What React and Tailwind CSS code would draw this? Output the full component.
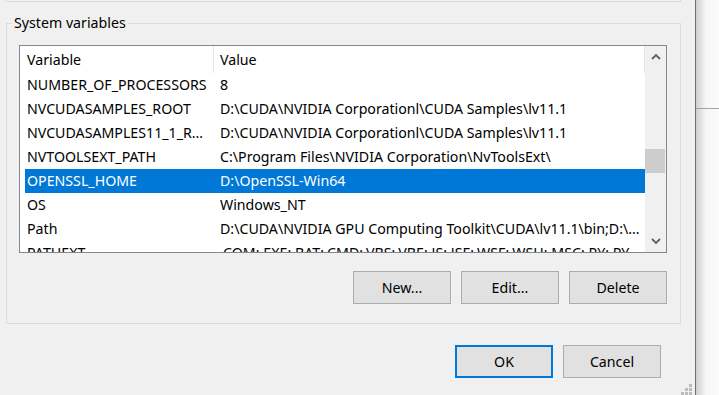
import React from 'react';

const rows = [
  { name: 'NUMBER_OF_PROCESSORS', value: '8' },
  { name: 'NVCUDASAMPLES_ROOT', value: 'D:\\CUDA\\NVIDIA Corporationl\\CUDA Samples\\lv11.1' },
  { name: 'NVCUDASAMPLES11_1_ROOT', value: 'D:\\CUDA\\NVIDIA Corporationl\\CUDA Samples\\lv11.1' },
  { name: 'NVTOOLSEXT_PATH', value: 'C:\\Program Files\\NVIDIA Corporation\\NvToolsExt\\' },
  { name: 'OPENSSL_HOME', value: 'D:\\OpenSSL-Win64', selected: true },
  { name: 'OS', value: 'Windows_NT' },
  { name: 'Path', value: 'D:\\CUDA\\NVIDIA GPU Computing Toolkit\\CUDA\\lv11.1\\bin;D:\\CUDA\\NVIDIA GPU Computing Toolkit\\CUDA\\lv11.1\\libnvvp' },
  { name: 'PATHEXT', value: '.COM;.EXE;.BAT;.CMD;.VBS;.VBE;.JS;.JSE;.WSF;.WSH;.MSC;.PY;.PYW' },
];

const Chevron = ({ down }) => (
  <svg width="10" height="7" viewBox="0 0 10 7" className={down ? 'rotate-180' : ''}>
    <path d="M1 6 L5 2 L9 6" fill="none" stroke="#606060" strokeWidth="1.8" />
  </svg>
);

const WinButton = ({ children, focused }) => (
  <button
    className={`h-[33px] w-[98px] bg-[#e1e1e1] text-black ${
      focused ? 'border-2 border-[#0078d7]' : 'border border-[#adadad]'
    }`}
  >
    {children}
  </button>
);

export default function App() {
  return (
    <div className="flex h-[395px] w-[719px] overflow-hidden bg-[#f0f0f0] font-['Noto_Sans',sans-serif] text-[14.2px] text-black">
      <div className="relative w-[696px] shrink-0 border-r border-[#6f6f6f]">
        <div className="ml-[5px] h-[2px] w-[676px] border-b border-l border-r border-[#dcdcdc]" />

        <div className="ml-[6px] mt-[21px] h-[301px] w-[675px] border border-[#dcdcdc]">
          <span className="-mt-[11px] ml-[5px] block w-fit bg-[#f0f0f0] px-[2px] leading-[20px]">System variables</span>

          <div className="ml-[12px] mt-[12px] flex h-[208px] w-[648px] border border-[#828790] bg-white">
            <div className="flex-1 overflow-hidden">
              <div className="flex h-[27px] items-center">
                <div className="flex h-full w-[194px] items-center border-r border-[#e5e5e5] pl-[7px]">Variable</div>
                <div className="flex h-full flex-1 items-center border-r border-[#e5e5e5] pl-[6px]">Value</div>
              </div>
              <div className="pl-[5px]">
                {rows.map((r) => (
                  <div
                    key={r.name}
                    className={`flex h-[24px] leading-[24px] ${r.selected ? 'bg-[#0078d7] text-white' : ''}`}
                  >
                    <div className="w-[188px] shrink-0 truncate pl-[2px] pr-[4px]">{r.name}</div>
                    <div className="min-w-0 flex-1 truncate pl-[7px] pr-[4px]">{r.value}</div>
                  </div>
                ))}
              </div>
            </div>
            <div className="flex w-[21px] flex-col bg-[#f0f0f0]">
              <div className="flex h-[21px] items-center justify-center">
                <Chevron />
              </div>
              <div className="h-[82px]" />
              <div className="mr-[1px] h-[24px] bg-[#cdcdcd]" />
              <div className="flex-1" />
              <div className="flex h-[21px] items-center justify-center">
                <Chevron down />
              </div>
            </div>
          </div>

          <div className="ml-[12px] mt-[18px] flex w-[648px] justify-end gap-[10px]">
            <WinButton>New...</WinButton>
            <WinButton>Edit...</WinButton>
            <WinButton>Delete</WinButton>
          </div>
        </div>

        <div className="mt-[21px] flex justify-end gap-[10px] pr-[34px]">
          <WinButton focused>OK</WinButton>
          <WinButton>Cancel</WinButton>
        </div>

        <svg className="absolute bottom-0 right-[2px]" width="12" height="12" viewBox="0 0 12 12">
          <rect x="8" y="1" width="3" height="3" fill="#bcbcbc" />
          <rect x="4" y="5" width="3" height="3" fill="#bcbcbc" />
          <rect x="8" y="5" width="3" height="3" fill="#bcbcbc" />
          <rect x="0" y="9" width="3" height="3" fill="#bcbcbc" />
          <rect x="4" y="9" width="3" height="3" fill="#bcbcbc" />
          <rect x="8" y="9" width="3" height="3" fill="#bcbcbc" />
        </svg>
      </div>

      <div className="flex-1 bg-[linear-gradient(to_right,#cfcfcf,#f6f6f6_10px,#fbfbfb)]">
        <div className="mt-[108px] h-px bg-[#a3a3a3]" />
      </div>
    </div>
  );
}
